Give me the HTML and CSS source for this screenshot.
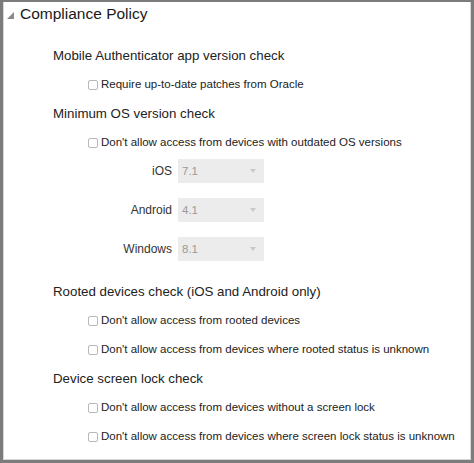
FILE: index.html
```html
<!DOCTYPE html>
<html>
<head>
<meta charset="utf-8">
<link rel="stylesheet" href="styles.css">
</head>
<body>
<div class="frame">
  <div class="panel">
    <div class="header">
      <span class="twisty"></span>
      <span class="title">Compliance Policy</span>
    </div>
    <div class="content">
      <div class="section">
        <div class="heading">Mobile Authenticator app version check</div>
        <label class="check"><span class="box"></span>Require up-to-date patches from Oracle</label>
      </div>
      <div class="section">
        <div class="heading">Minimum OS version check</div>
        <label class="check"><span class="box"></span>Don't allow access from devices with outdated OS versions</label>
        <div class="versions">
          <div class="vlabel">iOS</div><div class="select"><span>7.1</span><span class="arrow"></span></div>
          <div class="vlabel">Android</div><div class="select"><span>4.1</span><span class="arrow"></span></div>
          <div class="vlabel">Windows</div><div class="select"><span>8.1</span><span class="arrow"></span></div>
        </div>
      </div>
      <div class="section">
        <div class="heading">Rooted devices check (iOS and Android only)</div>
        <label class="check"><span class="box"></span>Don't allow access from rooted devices</label>
        <label class="check"><span class="box"></span>Don't allow access from devices where rooted status is unknown</label>
      </div>
      <div class="section">
        <div class="heading">Device screen lock check</div>
        <label class="check"><span class="box"></span>Don't allow access from devices without a screen lock</label>
        <label class="check"><span class="box"></span>Don't allow access from devices where screen lock status is unknown</label>
      </div>
    </div>
  </div>
</div>
</body>
</html>
```

FILE: styles.css
```css
html, body {
  margin: 0;
  padding: 0;
}
body {
  font-family: "Liberation Sans", Arial, sans-serif;
  color: #222;
  background: #7c7c7c;
}
.frame {
  width: 474px;
  height: 463px;
  box-sizing: border-box;
  padding: 2px 3px 3px 3px;
  background: #7c7c7c;
}
.panel {
  height: 100%;
  box-sizing: border-box;
  background: #fff;
  border: 1px solid #d6d6d6;
  border-top: none;
}
.header {
  display: flex;
  align-items: center;
  height: 24px;
  padding-left: 3px;
}
.twisty {
  width: 0;
  height: 0;
  border-left: 7px solid transparent;
  border-bottom: 7px solid #8a8a8a;
  margin-right: 6px;
  margin-top: 3px;
}
.title {
  font-size: 15.5px;
  color: #1a1a1a;
}
.content {
  padding-left: 49px;
  padding-top: 22px;
}
.heading {
  font-size: 13.3px;
  line-height: 16px;
  margin-bottom: 13px;
}
.section {
  margin-bottom: 14px;
}
.check {
  display: flex;
  align-items: center;
  font-size: 11.5px;
  line-height: 14px;
  margin-left: 35px;
  margin-bottom: 15px;
}
.box {
  width: 8px;
  height: 8px;
  border: 1px solid #b8b8b8;
  border-radius: 2px;
  margin-right: 3px;
  margin-top: 1px;
  background: #fff;
}
.versions {
  display: grid;
  grid-template-columns: 119px 86px;
  column-gap: 6px;
  row-gap: 15px;
  align-items: center;
  margin-top: -5px;
  margin-bottom: 23px;
}
.vlabel {
  text-align: right;
  font-size: 12px;
  color: #333;
}
.select {
  height: 24px;
  background: #ececec;
  display: flex;
  align-items: center;
  justify-content: space-between;
  padding: 0 8px 0 4px;
  font-size: 11.5px;
  color: #9a9a9a;
}
.arrow {
  width: 0;
  height: 0;
  border-left: 3px solid transparent;
  border-right: 3px solid transparent;
  border-top: 4px solid #c8c8c8;
}
```
